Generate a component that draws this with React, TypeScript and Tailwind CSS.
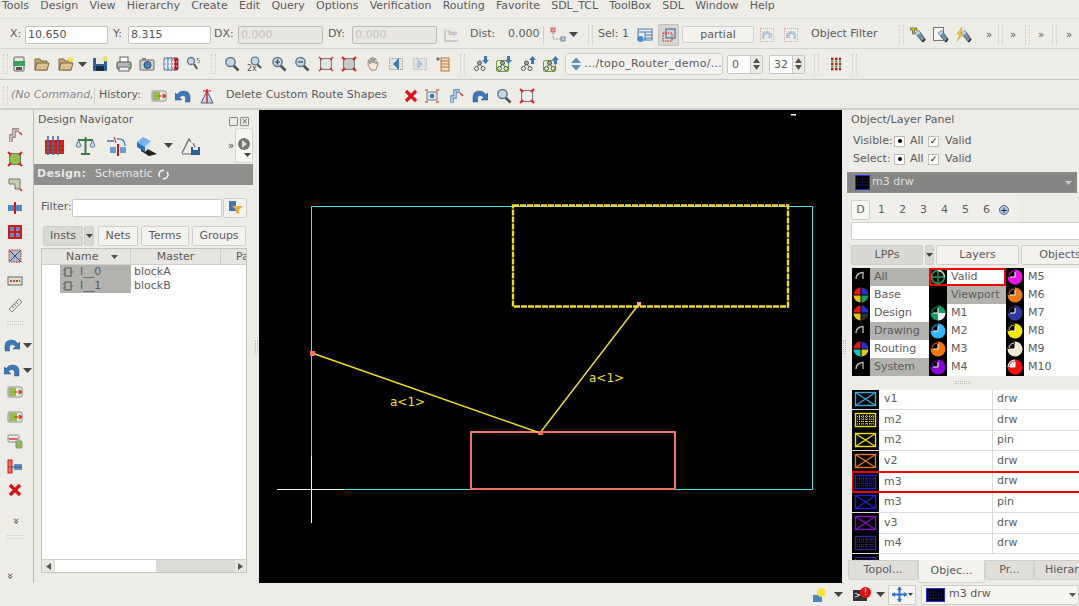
import type { ReactNode } from 'react'

const menus = ['Tools', 'Design', 'View', 'Hierarchy', 'Create', 'Edit', 'Query', 'Options', 'Verification', 'Routing', 'Favorite', 'SDL_TCL', 'ToolBox', 'SDL', 'Window', 'Help']

function Ic({ w = 16, h = 16, children }: { w?: number; h?: number; children: ReactNode }) {
	return (
		<svg width={w} height={h} viewBox={`0 0 ${w} ${h}`} className="shrink-0">
			{children}
		</svg>
	)
}

function Caret({ color = '#444' }: { color?: string }) {
	return (
		<svg width="9" height="5" viewBox="0 0 9 5" className="shrink-0">
			<path d="M0 0H9L4.5 5Z" fill={color} />
		</svg>
	)
}

function Grip() {
	return <div className="w-[5px] h-[20px] shrink-0 border-x border-dotted border-[#c9c8c3]" />
}

function Slot({ children }: { children: ReactNode }) {
	return <div className="w-[23.5px] shrink-0 flex justify-center items-center">{children}</div>
}

function Mag({ children }: { children?: ReactNode }) {
	return (
		<Ic>
			<line x1="9" y1="9" x2="14.5" y2="14.5" stroke="#555" strokeWidth="2.6" />
			<circle cx="6.5" cy="6" r="4.6" fill="#c5d6e6" stroke="#5f7a94" strokeWidth="1.5" />
			{children}
		</Ic>
	)
}

function FitBox({ inner = '#dfe3dd', thick = false }: { inner?: string; thick?: boolean }) {
	return (
		<Ic>
			<rect x="2.500" y="2.500" width="11" height="11" fill={inner} stroke="#777" />
			<path d="M1 1l3 3M15 1l-3 3M1 15l3-3M15 15l-3-3" stroke="#e02020" strokeWidth={thick ? 2 : 1.2} />
		</Ic>
	)
}

function Undo() {
	return (
		<Ic>
			<path d="M1 14V9Q1 3 7.500 3Q12 3 13.500 6.500L16 5V12H9L11.500 9.500Q10 7.500 8 7.500Q5.500 7.500 5.500 10V14Z" fill="#3f76b4" stroke="#2c5a90" strokeWidth="0.500" />
		</Ic>
	)
}

function Redo() {
	return (
		<Ic>
			<path d="M15 14V9Q15 3 8.500 3Q4 3 2.500 6.500L0 5V12H7L4.500 9.500Q6 7.500 8 7.500Q10.500 7.500 10.500 10V14Z" fill="#3f76b4" stroke="#2c5a90" strokeWidth="0.500" />
		</Ic>
	)
}

function RedX() {
	return (
		<Ic w={14} h={14}>
			<path d="M2 2L12 12M12 2L2 12" stroke="#d81414" strokeWidth="3.2" />
		</Ic>
	)
}

function Hier({ arrow = '#3f76b4', up = false, boxed = false }: { arrow?: string; up?: boolean; boxed?: boolean }) {
	return (
		<Ic>
			{boxed && <rect x="0.500" y="4.500" width="12" height="11" rx="1.500" fill="#e4efcf" stroke="#6aa03a" />}
			<circle cx="3.500" cy="12.500" r="2" fill="none" stroke="#555" />
			<circle cx="10" cy="12.500" r="2" fill="none" stroke="#555" />
			<circle cx="6.500" cy="7" r="2" fill="#9ab" stroke="#555" />
			<path d="M5.500 9L4 11M7.500 9L9.500 11" stroke="#555" />
			<path d={up ? 'M11 8V4H9L12.500 0L16 4H14V8Z' : 'M11 0V4H9L12.500 8L16 4H14V0Z'} fill={arrow} />
		</Ic>
	)
}

function Route({ tone = '#8a6a70' }: { tone?: string }) {
	return (
		<Ic>
			<path d="M4 15V9H7V3H12" fill="none" stroke={tone} strokeWidth="3.400" />
			<path d="M4 15V9H7V3H12" fill="none" stroke="#f0eee8" strokeWidth="1.200" />
			<path d="M12 5L15 8" stroke="#e02020" strokeWidth="1.300" />
		</Ic>
	)
}

function GreenBox({ wide = false }: { wide?: boolean }) {
	return (
		<Ic>
			<rect x="1" y="3" width="14" height="10" rx="1.500" fill="#e8e8e4" stroke="#888" />
			<rect x="2" y="4" width={wide ? 8 : 7} height="8" fill="#8fc04a" />
			<path d="M7 8H14M12 6L14.500 8L12 10" stroke="#e02020" fill="none" strokeWidth="1.200" />
		</Ic>
	)
}

function Torch({ children }: { children?: ReactNode }) {
	return (
		<Ic>
			{children}
			<path d="M5 6L9 3.500L15 12L12.500 15Z" fill="#6f8ea8" stroke="#444" strokeWidth="0.700" />
			<path d="M5 6L9 3.500L10.500 6L7 8.500Z" fill="#b9d0e4" />
			<path d="M12.500 15L15 12" stroke="#222" strokeWidth="1.500" />
		</Ic>
	)
}

function Sw({ color, kind }: { color: string; kind: 'x' | 'dots' }) {
	return (
		<svg width="27" height="20" viewBox="0 0 27 20" className="shrink-0">
			<rect width="27" height="20" fill="#000" />
			<rect x="3.500" y="3.500" width="20" height="13" fill="none" stroke={color} strokeWidth="1.400" />
			{kind === 'x' ? (
				<path d="M3.500 3.500L23.500 16.500M23.500 3.500L3.500 16.500" stroke={color} strokeWidth="1.300" />
			) : (
				<path d="M5 6.500H22M5 9H22M5 11.500H22M5 14H22M7.500 5V15M11 5V15M14.500 5V15M18 5V15M21 5V15" stroke={color} strokeWidth="1" strokeDasharray="1 1" />
			)}
		</svg>
	)
}

function Dots({ w, h }: { w: number; h: number }) {
	return (
		<svg width={w} height={h} viewBox={`0 0 ${w} ${h}`} className="shrink-0">
			<rect width={w} height={h} fill="#000" />
			<rect x="0.500" y="0.500" width={w - 1} height={h - 1} fill="none" stroke="#2030e0" />
			<path d={`M2 4H${w - 2}M2 7H${w - 2}M2 10H${w - 2}`} stroke="#2030e0" strokeDasharray="1 1.500" />
		</svg>
	)
}

function Pie({ color, second, notch = '#000' }: { color: string; second?: string; notch?: string }) {
	return (
		<svg width="18" height="18" viewBox="0 0 18 18" className="shrink-0">
			<rect width="18" height="18" fill="#000" />
			<circle cx="9" cy="9" r="7.500" fill={color} />
			<path d="M9 9V1.500A7.500 7.500 0 0 0 1.500 9Z" fill={notch} />
			<path d="M3 8.500A6 6 0 0 1 8.500 3" fill="none" stroke={color} strokeWidth="1" />
			<path d="M4 9H9V4" fill="none" stroke="#fff" strokeWidth="1" />
			{second && <path d="M9 9H16.500A7.500 7.500 0 0 1 9 16.500Z" fill={second} />}
		</svg>
	)
}

function Multi({ last = '#20a060', third = '#e0c818' }: { last?: string; third?: string }) {
	return (
		<svg width="18" height="18" viewBox="0 0 18 18" className="shrink-0">
			<rect width="18" height="18" fill="#000" />
			<path d="M9 9V1.500A7.500 7.500 0 0 0 1.500 9Z" fill="#e01818" />
			<path d="M9 9V1.500A7.500 7.500 0 0 1 16.500 9Z" fill="#2035d0" />
			<path d="M9 9H1.500A7.500 7.500 0 0 0 9 16.500Z" fill={third} />
			<path d="M9 9H16.500A7.500 7.500 0 0 1 9 16.500Z" fill={last} />
			<path d="M1.500 9H16.500M9 1.500V16.500" stroke="#000" strokeWidth="1" />
		</svg>
	)
}

function Arc() {
	return (
		<svg width="18" height="18" viewBox="0 0 18 18" className="shrink-0">
			<rect width="18" height="18" fill="#000" />
			<path d="M4 11Q4 5 11 4.500V11" fill="none" stroke="#bbb" strokeWidth="1.300" />
		</svg>
	)
}

function ValidPie() {
	return (
		<svg width="18" height="18" viewBox="0 0 18 18" className="shrink-0">
			<rect width="18" height="18" fill="#000" />
			<circle cx="9" cy="9" r="6.500" fill="none" stroke="#1fa060" strokeWidth="1.500" />
			<path d="M2 9H16M9 2V16" stroke="#1fa060" strokeWidth="1.300" />
			<path d="M9 2.500A6.500 6.500 0 0 1 15.500 9" fill="none" stroke="#ddd" strokeWidth="1.300" />
		</svg>
	)
}

function LppCell({ icon, label, grey = false }: { icon: ReactNode; label: string; grey?: boolean }) {
	return (
		<div className="flex h-[18px] items-stretch">
			<div className="w-[18px] bg-black shrink-0">{icon}</div>
			<div className={grey ? 'flex-1 bg-[#b3b2ae] pl-[4px] leading-[18px]' : 'flex-1 bg-white pl-[4px] leading-[18px]'}>
				{label}
			</div>
		</div>
	)
}

function Btn({ w, children, on = false }: { w: string; children: ReactNode; on?: boolean }) {
	return (
		<div
			className={`${w} h-[20px] shrink-0 flex items-center justify-center rounded-[2px] border border-[#cfcec9] ${on ? 'bg-[#d9d8d3]' : 'bg-[#f3f2ee]'}`}
		>
			{children}
		</div>
	)
}

function Input({ w, value, off = false }: { w: string; value: string; off?: boolean }) {
	return (
		<div
			className={`${w} h-[18px] shrink-0 rounded-[2px] border pl-[2px] leading-[16px] ${off ? 'border-[#bdbcb7] bg-[#e8e7e2] text-[#c3c2bd]' : 'border-[#c4c3be] bg-white text-[#555]'}`}
		>
			{value}
		</div>
	)
}

function Spin({ w, value }: { w: string; value: string }) {
	return (
		<div className={`${w} h-[19px] shrink-0 flex rounded-[2px] border border-[#c9c8c3] bg-white`}>
			<div className="flex-1 pl-[4px] leading-[17px]">{value}</div>
			<div className="w-[12px] bg-[#ecebe6] border-l border-[#c9c8c3] flex flex-col items-center justify-center gap-[2px]">
				<svg width="7" height="5"><path d="M0 5H7L3.500 0Z" fill="#555" /></svg>
				<svg width="7" height="5"><path d="M0 0H7L3.500 5Z" fill="#555" /></svg>
			</div>
		</div>
	)
}

const layers: { name: string; kind: string; color: string; sw: 'x' | 'dots'; sel?: boolean }[] = [
	{ name: 'v1', kind: 'drw', color: '#35a8e0', sw: 'x' },
	{ name: 'm2', kind: 'drw', color: '#f0e000', sw: 'dots' },
	{ name: 'm2', kind: 'pin', color: '#f0e000', sw: 'x' },
	{ name: 'v2', kind: 'drw', color: '#e87810', sw: 'x' },
	{ name: 'm3', kind: 'drw', color: '#2020e0', sw: 'dots', sel: true },
	{ name: 'm3', kind: 'pin', color: '#2020e0', sw: 'x' },
	{ name: 'v3', kind: 'drw', color: '#8010c8', sw: 'x' },
	{ name: 'm4', kind: 'drw', color: '#302890', sw: 'dots' },
]

export default function App() {
	return (
		<div className="w-[1079px] h-[606px] overflow-hidden flex flex-col bg-[#edece7] text-[#5c5c5c] text-[11px] font-['DejaVu_Sans',sans-serif]">
			{/* menu bar, cut off at the top */}
			<div className="h-[19px] shrink-0 flex gap-[11.200px] pl-[2px] border-b border-[#dcdbd6] leading-[12px]">
				{menus.map((m) => (
					<span key={m}>{m}</span>
				))}
			</div>

			{/* coordinates toolbar */}
			<div className="h-[30px] shrink-0 flex items-center pl-[10px] pt-[2px] border-b border-[#d4d3ce] whitespace-nowrap">
				<span className="w-[15px]">X:</span>
				<Input w="w-[83px]" value="10.650" />
				<span className="w-[15px] ml-[5px]">Y:</span>
				<Input w="w-[83px]" value="8.315" />
				<span className="w-[24px] ml-[3px]">DX:</span>
				<Input w="w-[85px]" value="0.000" off />
				<span className="w-[24px] ml-[5px]">DY:</span>
				<Input w="w-[85px]" value="0.000" off />
				<div className="ml-[6px]">
					<Ic>
						<path d="M2 2V14H15" fill="none" stroke="#aaa" />
						<text x="4" y="8" fontSize="6" fill="#999">Top</text>
					</Ic>
				</div>
				<span className="ml-[11px] w-[38px]">Dist:</span>
				<span className="w-[32px]">0.000</span>
				<div className="ml-[3px] w-px h-[18px] bg-[#cfcec9]" />
				<div className="ml-[6px]">
					<Ic>
						<path d="M3 3V12H13" fill="none" stroke="#999" strokeDasharray="2 1" />
						<rect x="1" y="1" width="4" height="4" fill="#f0a0a0" stroke="#c33" strokeWidth="0.700" />
						<rect x="11" y="10" width="4" height="4" fill="#b8cbe0" stroke="#567" strokeWidth="0.700" />
					</Ic>
				</div>
				<div className="ml-[3px]"><Caret /></div>
				<div className="ml-[10px]"><Grip /></div>
				<span className="ml-[5px] w-[39px]">Sel: 1</span>
				<Ic>
					<rect x="1" y="2" width="14" height="11" fill="#e8edf3" stroke="#4a78a8" />
					<path d="M1 5H15M8 5V13M8 8H15M8 11H15" stroke="#4a78a8" />
					<circle cx="3.500" cy="12" r="3" fill="#3f8fd0" />
				</Ic>
				<div className="ml-[5px] w-[21px] h-[22px] rounded-[2px] bg-[#d6d5d0] border border-[#c2c1bc] flex items-center justify-center">
					<Ic w={14} h={14}>
						<rect x="4" y="1" width="9" height="9" fill="none" stroke="#2f5f98" />
						<rect x="1" y="5" width="9" height="8" fill="none" stroke="#d81414" strokeDasharray="1.500 1" />
					</Ic>
				</div>
				<div className="ml-[3px] w-[72px] h-[17px] rounded-[2px] border border-[#cfcec9] bg-[#f3f2ee] text-center leading-[15px]">partial</div>
				<div className="ml-[6px] w-[14px] h-[14px] border border-dotted border-[#e0a890] flex items-center justify-center">
					<svg width="12" height="10"><path d="M1 9V5Q1 1 6 1Q9 1 10 4L11 3V8H6L8 6Q7 4 5.500 4Q3.500 4 3.500 6V9Z" fill="#b5c5d8" /></svg>
				</div>
				<div className="ml-[10px] w-[14px] h-[14px] border border-dotted border-[#e0a890] flex items-center justify-center">
					<svg width="12" height="10"><path d="M11 9V5Q11 1 6 1Q3 1 2 4L1 3V8H6L4 6Q5 4 6.500 4Q8.500 4 8.500 6V9Z" fill="#b5c5d8" /></svg>
				</div>
				<span className="ml-[13px] w-[88px]">Object Filter</span>
				<Grip />
				<div className="ml-[6px]">
					<Torch>
						<path d="M0 1H7V3H4.500V7H2.500V3H0Z" fill="#e8c810" stroke="#222" strokeWidth="0.500" />
					</Torch>
				</div>
				<div className="ml-[7px]">
					<Torch>
						<rect x="0.500" y="0.500" width="10" height="13" fill="#f4f4f4" stroke="#777" />
					</Torch>
				</div>
				<div className="ml-[7px]">
					<Torch>
						<path d="M6 0L1 7H4L1 14L8 6H5Z" fill="#f0c820" stroke="#b08a10" strokeWidth="0.400" />
					</Torch>
				</div>
				<span className="ml-[14px] w-[12px] text-[10px]">»</span>
				<Grip />
				<span className="ml-[7px] w-[15px] text-[10px]">»</span>
				<Grip />
				<span className="ml-[8px] w-[14px] text-[10px]">»</span>
				<Grip />
				<span className="ml-[9px] text-[10px]">»</span>
			</div>

			{/* main toolbar */}
			<div className="h-[31px] shrink-0 flex items-center pl-[3px] border-b border-[#c9c8c3] whitespace-nowrap">
				<Grip />
				<div className="-ml-[1px] flex items-center">
					<Slot>
						<Ic>
							<rect x="3" y="1" width="10" height="14" rx="1" fill="#e6e6e0" stroke="#666" />
							<rect x="2" y="5" width="12" height="5" fill="#3fa05a" />
							<rect x="5" y="11" width="6" height="3" fill="#555" />
						</Ic>
					</Slot>
					<Slot>
						<Ic>
							<path d="M1 14V3H6L7 5H13V14Z" fill="#c9a56a" stroke="#7a6a50" />
							<path d="M1 14L3 7H15L13 14Z" fill="#dcc08c" stroke="#7a6a50" />
						</Ic>
					</Slot>
					<Slot>
						<Ic>
							<path d="M1 14V3H6L7 5H13V14Z" fill="#c9a56a" stroke="#7a6a50" />
							<path d="M1 14L3 7H15L13 14Z" fill="#dcc08c" stroke="#7a6a50" />
							<circle cx="12.500" cy="3.500" r="2.500" fill="#f4e050" />
						</Ic>
					</Slot>
					<div className="w-[11px] flex"><Caret /></div>
					<Slot>
						<Ic>
							<rect x="1" y="2" width="14" height="13" rx="1" fill="#2f5f98" />
							<rect x="4" y="2" width="8" height="6" fill="#e8e8e8" />
							<rect x="4" y="10" width="8" height="5" fill="#1c2c40" />
							<circle cx="13" cy="3" r="2.500" fill="#f4e050" />
						</Ic>
					</Slot>
					<Slot>
						<Ic>
							<rect x="4" y="1" width="8" height="6" fill="#fafafa" stroke="#666" />
							<rect x="1" y="6" width="14" height="7" rx="1" fill="#b5b8ba" stroke="#555" />
							<rect x="3" y="11" width="10" height="4" fill="#eee" stroke="#666" />
							<rect x="12" y="8" width="2" height="1" fill="#4c4" />
						</Ic>
					</Slot>
					<Slot>
						<Ic>
							<rect x="1" y="4" width="14" height="10" rx="1" fill="#d0d3d6" stroke="#666" />
							<rect x="3" y="2" width="4" height="2" fill="#888" />
							<circle cx="8.500" cy="9" r="3.500" fill="#3f86c4" stroke="#345" />
						</Ic>
					</Slot>
					<Slot>
						<Ic>
							<rect x="1" y="2" width="14" height="12" rx="1" fill="#d8e2ee" stroke="#3f6fa4" />
							<path d="M5 2V14M9 2V14" stroke="#3f6fa4" />
							<rect x="11" y="2" width="4" height="12" fill="#d81414" />
							<path d="M1 6H15M1 10H15" stroke="#fff" strokeDasharray="1 1" />
						</Ic>
					</Slot>
					<Slot>
						<Ic>
							<circle cx="5" cy="5" r="3.500" fill="#c5d6e6" stroke="#5f7a94" strokeWidth="1.300" />
							<path d="M8 8L11 13" stroke="#555" strokeWidth="2" />
							<text x="10" y="7" fontSize="7" fill="#4a78a8">5</text>
						</Ic>
					</Slot>
					<div className="w-[14px] flex justify-center"><Grip /></div>
					<Slot><Mag /></Slot>
					<Slot>
						<Ic>
							<line x1="10" y1="8" x2="14" y2="12" stroke="#555" strokeWidth="2.300" />
							<circle cx="8" cy="5" r="3.800" fill="#c5d6e6" stroke="#5f7a94" strokeWidth="1.300" />
							<text x="0" y="15" fontSize="8" fill="#555">2x</text>
						</Ic>
					</Slot>
					<Slot>
						<Mag>
							<path d="M4 6H9M6.500 3.500V8.500" stroke="#345" strokeWidth="1.200" />
						</Mag>
					</Slot>
					<Slot>
						<Mag>
							<path d="M4 6H9" stroke="#345" strokeWidth="1.200" />
						</Mag>
					</Slot>
					<Slot><FitBox /></Slot>
					<Slot><FitBox inner="#c9c9c4" thick /></Slot>
					<Slot>
						<Ic>
							<path d="M3 9V5Q3 4 4 4L5 8V2.500Q6 1.500 7 2.500V7V2Q8 1 9 2V7V3Q10 2 11 3V8L12 6Q13.500 6 13 8L11 14H6L3 9Z" fill="#f4e6d0" stroke="#777" strokeWidth="0.800" />
						</Ic>
					</Slot>
					<Slot>
						<Ic>
							<rect x="1.500" y="2.500" width="13" height="11" fill="#e4e4df" stroke="#999" strokeDasharray="1.500 1" />
							<path d="M11 2V14L5 8Z" fill="#3f76b4" />
						</Ic>
					</Slot>
					<Slot>
						<Ic>
							<rect x="1.500" y="2.500" width="13" height="11" fill="#e4e4df" stroke="#bbb" strokeDasharray="1.500 1" />
							<path d="M5 2V14L11 8Z" fill="#b5c5d8" />
						</Ic>
					</Slot>
					<Slot>
						<Ic>
							<path d="M1 3H5M3 1V5" stroke="#555" />
							<rect x="6" y="2" width="8" height="13" fill="#f0dcc0" stroke="#b87840" />
							<path d="M6 5H14M6 8H14M6 11H14" stroke="#b87840" />
						</Ic>
					</Slot>
					<div className="w-[14px] flex justify-center"><Grip /></div>
					<Slot><Hier /></Slot>
					<Slot><Hier boxed /></Slot>
					<Slot><Hier up /></Slot>
					<Slot><Hier up boxed /></Slot>
				</div>
				<div className="ml-[2px] w-[158px] h-[22px] shrink-0 flex items-center gap-[3px] rounded-[3px] border border-[#cfcec9] bg-[#f3f2ee] pl-[5px]">
					<svg width="11" height="14" viewBox="0 0 11 14"><path d="M0 6L5.500 0L11 6ZM0 8H11L5.500 14Z" fill="#5f8fc0" /></svg>
					<span className="tracking-[0.25px]">.../topo_Router_demo/...</span>
				</div>
				<div className="ml-[4px]"><Spin w="w-[36px]" value="0" /></div>
				<div className="ml-[6px]"><Spin w="w-[36px]" value="32" /></div>
				<div className="ml-[9px]"><Grip /></div>
				<div className="ml-[10px]">
					<Ic w={14} h={14}>
						<path d="M2 2H12M2 7H12M2 12H12" stroke="#c01818" strokeWidth="2.500" strokeDasharray="2.500 1.500" />
						<path d="M2 4.500H12M2 9.500H12" stroke="#3a9a3a" strokeWidth="1.500" strokeDasharray="2.500 1.500" />
					</Ic>
				</div>
				<div className="ml-[9px]"><Grip /></div>
			</div>

			{/* history toolbar */}
			<div className="h-[30px] shrink-0 flex items-center pl-[3px] pt-[3px] border-b-2 border-[#cfcec9] whitespace-nowrap">
				<Grip />
				<span className="ml-[3px] w-[83px] italic text-[#8a8a8a] overflow-hidden">(No Command,</span>
				<div className="w-px h-[16px] bg-[#cfcec9]" />
				<span className="ml-[4px] w-[43px]">History:</span>
				<div className="ml-[9px]"><GreenBox /></div>
				<div className="ml-[8px]"><Redo /></div>
				<div className="ml-[8px]">
					<Ic>
						<path d="M8 3L2 15H14Z" fill="#c5d6e6" stroke="#557" />
						<path d="M8 1V15" stroke="#d81414" strokeWidth="1.400" />
						<path d="M4 3H12" stroke="#d81414" />
					</Ic>
				</div>
				<span className="ml-[11px] w-[178px]">Delete Custom Route Shapes</span>
				<div className="w-[14px]"><RedX /></div>
				<div className="ml-[6px]">
					<Ic>
						<rect x="3" y="4" width="10" height="8" fill="#dfe8f0" stroke="#777" />
						<path d="M1 2H4M12 2H15M1 14H4M12 14H15" stroke="#e02020" />
						<rect x="6" y="6" width="4" height="4" fill="#3f76b4" />
					</Ic>
				</div>
				<div className="ml-[8px]"><Route tone="#4a80bc" /></div>
				<div className="ml-[8px]"><Undo /></div>
				<div className="ml-[8px]"><Mag /></div>
				<div className="ml-[7px]"><FitBox inner="#ecebe6" thick /></div>
			</div>

			{/* work area */}
			<div className="h-[473px] shrink-0 flex">
				{/* left vertical toolbar */}
				<div className="w-[34px] shrink-0 border-r border-[#bdbcb7] flex flex-col items-center pt-[17px] pb-[1px]">
					<div className="flex flex-col gap-[8.300px] items-center pr-[4px]">
						<Route />
						<FitBox inner="#8fc04a" thick />
						<Ic>
							<path d="M2 3H13V13H8V8H2Z" fill="#c8cfa8" stroke="#777" />
							<path d="M13 13L15 15" stroke="#e02020" strokeWidth="1.500" />
						</Ic>
						<Ic>
							<rect x="1" y="5" width="6" height="6" fill="#4a8ac4" />
							<rect x="9" y="5" width="6" height="6" fill="#4a8ac4" />
							<rect x="7" y="2" width="2" height="12" fill="#d81414" />
						</Ic>
						<Ic>
							<rect x="1" y="1" width="14" height="14" rx="1" fill="#d81414" />
							<rect x="3" y="3" width="4" height="4" fill="#5a90d0" />
							<rect x="9" y="3" width="4" height="4" fill="#5a90d0" />
							<rect x="3" y="9" width="4" height="4" fill="#5a90d0" />
							<rect x="9" y="9" width="4" height="4" fill="#5a90d0" />
						</Ic>
						<Ic>
							<rect x="2" y="2" width="12" height="12" fill="#a9bcd2" stroke="#d81414" strokeDasharray="1.500 1" />
							<path d="M3 3L13 13M13 3L3 13" stroke="#445" />
						</Ic>
						<Ic>
							<rect x="1" y="4" width="14" height="8" fill="#e4e1d4" stroke="#667" />
							<path d="M3 8H13" stroke="#c05020" strokeWidth="2" strokeDasharray="2 1" />
						</Ic>
						<Ic>
							<path d="M2 12L12 2L15 5L5 15Z" fill="#e6e6e2" stroke="#888" />
							<path d="M5 9L7 11M7 7L9 9M9 5L11 7" stroke="#888" />
						</Ic>
					</div>
					<div className="mt-[8px] w-[16px] h-[5px] mr-[4px] border-y border-dotted border-[#c9c8c3]" />
					<div className="mt-[12px] flex flex-col gap-[9px] items-center">
						<div className="flex items-center gap-[3px] ml-[2px]"><Undo /><Caret /></div>
						<div className="flex items-center gap-[3px] ml-[2px]"><Redo /><Caret /></div>
					</div>
					<div className="mt-[6px] flex flex-col gap-[8.500px] items-center pr-[4px]">
						<GreenBox />
						<GreenBox wide />
						<Ic>
							<rect x="1" y="2" width="11" height="7" rx="1" fill="#e8e8e4" stroke="#888" />
							<rect x="9" y="8" width="6" height="7" rx="1" fill="#8fc04a" stroke="#888" />
							<path d="M2 6H11" stroke="#e02020" strokeWidth="1.300" />
						</Ic>
						<Ic>
							<rect x="1" y="2" width="4" height="13" fill="#e87060" stroke="#d81414" />
							<rect x="7" y="6" width="8" height="6" fill="#5a90d0" />
							<path d="M1 9H15" stroke="#555" />
						</Ic>
						<div className="mt-[1px]"><RedX /></div>
					</div>
					<span className="mt-[20px] pr-[4px] leading-[12px] text-[#444] rotate-90">»</span>
					<div className="mt-[6px] mr-[4px] w-[16px] h-[5px] border-y border-dotted border-[#c9c8c3]" />
					<span className="mt-[31px] leading-[12px] text-[#444] mr-[13px] rotate-90">»</span>
				</div>

				{/* design navigator */}
				<div className="w-[219px] shrink-0 flex flex-col">
					<div className="h-[17px] flex items-end pl-[4px] pb-[1px] justify-between pr-[4px]">
						<span className="text-[11px] leading-[13px]">Design Navigator</span>
						<div className="flex gap-[2px]">
							<div className="w-[9px] h-[9px] border border-[#888] rounded-[1px]" />
							<div className="w-[9px] h-[9px] border border-[#888] rounded-[1px] text-[8px] leading-[7px] text-center">×</div>
						</div>
					</div>
					<div className="h-[37px] flex items-center pl-[10px]">
						<Ic w={21} h={21}>
							<rect x="1" y="5" width="19" height="14" fill="#d81414" />
							<path d="M1 9H20M1 13H20M1 17H20" stroke="#3a9a3a" strokeWidth="1.200" strokeDasharray="2 1" />
							<path d="M4 1V20M9 1V20M14 1V20" stroke="#3f6fa4" strokeWidth="1.600" />
						</Ic>
						<div className="ml-[10px]">
							<Ic w={21} h={21}>
								<path d="M10.500 2V18M3 5H18M6 19H15" stroke="#3f7a50" strokeWidth="2" />
								<path d="M1 11L3.500 5L6 11Q3.500 14 1 11ZM15 11L17.500 5L20 11Q17.500 14 15 11Z" fill="#c5dcec" stroke="#5a7a90" />
							</Ic>
						</div>
						<div className="ml-[9px]">
							<Ic w={24} h={21}>
								<path d="M2 6H9M12 4Q20 3 20 11" fill="none" stroke="#3f76b4" strokeWidth="1.300" />
								<rect x="5" y="12" width="6" height="6" fill="#6a9ccc" />
								<rect x="15" y="12" width="6" height="6" fill="#6a9ccc" />
								<rect x="12" y="9" width="2" height="12" fill="#d81414" />
								<path d="M9 2L11 8" stroke="#d81414" />
							</Ic>
						</div>
						<div className="ml-[7px]">
							<Ic w={22} h={21}>
								<path d="M6 11L21 19L13 21L5 16Z" fill="#222" />
								<path d="M1 7L7 2L15 6L9 12Z" fill="#7ab4ea" />
								<path d="M1 7L9 12V17L1 12Z" fill="#2f6fb4" />
								<path d="M9 12L15 6V11L9 17Z" fill="#d4e4f4" />
							</Ic>
						</div>
						<div className="ml-[6px]"><Caret /></div>
						<div className="ml-[5px]">
							<Ic w={23} h={21}>
								<path d="M4 18L11 4L13 7M15 8L19 16M4 19H13" fill="none" stroke="#667" strokeWidth="1.200" />
								<rect x="13" y="12" width="9" height="8" fill="#2f5f98" />
								<rect x="15" y="12" width="5" height="3" fill="#e8e8e8" />
							</Ic>
						</div>
						<span className="ml-[27px] w-[9px] text-[#444] text-[10px]">»</span>
						<div className="w-[21px] h-[35px] rounded-t-[3px] bg-[#f6f5f1] border border-[#d4d3ce] flex flex-col items-center pt-[8px]">
							<Ic w={14} h={14}>
								<circle cx="7" cy="7" r="6" fill="#777" />
								<path d="M5 3V11L10 7Z" fill="#ddd" />
							</Ic>
							<div className="self-end mr-[1px] mt-[2px]"><svg width="7" height="4"><path d="M0 0H7L3.500 4Z" fill="#444" /></svg></div>
						</div>
					</div>
					<div className="h-[21px] bg-[#8f8f8d] flex items-center pl-[3px] text-[#e8e8e6] w-[219px]">
						<span className="font-bold tracking-[0.3px] w-[58px]">Design:</span>
						<span>Schematic</span>
						<svg width="11" height="11" viewBox="0 0 11 11" className="ml-[5px]">
							<path d="M2 8A4 4 0 0 1 6 1.500M9 3A4 4 0 0 1 5 9.500" fill="none" stroke="#f4f4f4" strokeWidth="1.500" />
						</svg>
					</div>
					<div className="ml-[7px] mt-[13px] h-[19px] flex items-center w-[206px]">
						<span className="w-[31px]">Filter:</span>
						<div className="w-[150px] h-[18px] bg-white border border-[#c9c8c3] rounded-[2px]" />
						<div className="ml-[1px] w-[24px] h-[20px] rounded-[2px] border border-[#cfcec9] bg-[#f3f2ee] flex items-center justify-center">
							<Ic w={15} h={13}>
								<rect x="1" y="0" width="7" height="10" fill="#3f76b4" />
								<path d="M4 5H15L11 9V13L8 12V9Z" fill="#e8b040" />
							</Ic>
						</div>
					</div>
					<div className="ml-[9px] mt-[9px] h-[20px] flex">
						<Btn w="w-[40px]" on>Insts</Btn>
						<div className="ml-px w-[10px] h-[20px] rounded-[2px] bg-[#d9d8d3] border border-[#cfcec9] flex items-center justify-center"><svg width="7" height="4"><path d="M0 0H7L3.500 4Z" fill="#444" /></svg></div>
						<div className="ml-[4px]"><Btn w="w-[40px]">Nets</Btn></div>
						<div className="ml-[3px]"><Btn w="w-[48px]">Terms</Btn></div>
						<div className="ml-[3px]"><Btn w="w-[54px]">Groups</Btn></div>
					</div>
					<div className="ml-[7px] mt-[2px] w-[206px] h-[325px] border border-[#c4c3be] bg-white flex flex-col">
						<div className="h-[16px] shrink-0 flex bg-[#e6e5e0] border-b border-[#d0cfca] leading-[15px] overflow-hidden">
							<div className="w-[89px] shrink-0 pl-[24px] border-r border-[#cfcec9] flex items-center gap-[13px]">Name<svg width="7" height="4"><path d="M0 0H7L3.500 4Z" fill="#555" /></svg></div>
							<div className="w-[90px] shrink-0 text-center border-r border-[#cfcec9]">Master</div>
							<div className="pl-[15px] whitespace-nowrap">Pa</div>
						</div>
						<div className="flex-1">
							{[['I__0', 'blockA'], ['I__1', 'blockB']].map(([inst, master]) => (
								<div key={inst} className="h-[14px] flex leading-[14px]">
									<div className="ml-[18px] w-[71px] bg-[#b3b2ae] flex items-center pl-[3px] gap-[7px]">
										<svg width="10" height="10" viewBox="0 0 10 10"><rect x="2" y="1" width="6" height="8" fill="none" stroke="#555" /><path d="M0 3H2M0 7H2M8 5H10" stroke="#555" /></svg>
										<span>{inst}</span>
									</div>
									<span className="ml-[3px]">{master}</span>
								</div>
							))}
						</div>
						<div className="h-[13px] shrink-0 flex border-t border-[#cfcec9]">
							<div className="w-[12px] bg-[#e8e7e2] flex items-center justify-center"><svg width="5" height="7"><path d="M5 0V7L0 3.500Z" fill="#555" /></svg></div>
							<div className="w-[103px] bg-white border-x border-[#dcdbd6]" />
							<div className="w-[78px] bg-[#dcdbd6]" />
							<div className="flex-1 bg-[#e8e7e2] flex items-center justify-center"><svg width="5" height="7"><path d="M0 0V7L5 3.500Z" fill="#555" /></svg></div>
						</div>
					</div>
				</div>

				{/* splitter */}
				<div className="w-[6px] shrink-0 flex items-center justify-center">
					<div className="w-[3px] h-[14px] border-x border-dotted border-[#bbb]" />
				</div>

				{/* layout canvas */}
				<div className="w-[583px] shrink-0 bg-black">
					<svg width="583" height="473" viewBox="259 110 583 473">
						<path d="M344 489.500H812.500V206.500H311.500V456" fill="none" stroke="#40e8e8" strokeWidth="1" />
						<path d="M311.500 456V523M277 489.500H344" stroke="#f4f4f4" strokeWidth="1" />
						<rect x="513" y="205.500" width="275" height="101" fill="none" stroke="#f2d820" strokeWidth="2.400" strokeDasharray="6 1" />
						<rect x="471" y="432" width="204" height="57" fill="none" stroke="#f47060" strokeWidth="2" />
						<path d="M639 304L540 433M312 353L540 433" stroke="#f2e020" strokeWidth="1.400" />
						<rect x="637" y="302" width="4" height="4" fill="#f8b090" />
						<rect x="538" y="431" width="5" height="4" fill="#f47060" />
						<rect x="310" y="351" width="5" height="5" fill="#f47060" />
						<rect x="791" y="114" width="5" height="1.500" fill="#fff" />
						<text x="390" y="406" fontSize="12" fill="#f2e020" fontFamily="DejaVu Sans">a&lt;1&gt;</text>
						<text x="589" y="382" fontSize="12" fill="#f2e020" fontFamily="DejaVu Sans">a&lt;1&gt;</text>
					</svg>
				</div>

				{/* splitter */}
				<div className="w-[5px] shrink-0 flex items-center justify-center">
					<div className="w-[3px] h-[14px] border-x border-dotted border-[#bbb]" />
				</div>

				{/* object / layer panel */}
				<div className="flex-1 min-w-0 flex flex-col overflow-hidden">
					<div className="h-[18px] pl-[4px] pb-[2px] flex items-end leading-[13px]">Object/Layer Panel</div>
					{['Visible:', 'Select:'].map((label, i) => (
						<div key={label} className={`${i === 0 ? 'mt-[4px]' : ''} h-[18px] flex items-center pl-[6px]`}>
							<span className="w-[41px]">{label}</span>
							<div className="w-[11px] h-[11px] bg-white border border-[#bbb] flex items-center justify-center">
								<div className="w-[4px] h-[4px] rounded-full bg-black" />
							</div>
							<span className="ml-[5px] w-[18px]">All</span>
							<div className="w-[11px] h-[11px] bg-white border border-[#bbb] flex items-center justify-center text-[9px] leading-[9px] text-black">✓</div>
							<span className="ml-[6px]">Valid</span>
						</div>
					))}
					<div className="mt-[4px] h-[21px] w-[230px] bg-[#858583] border border-[#8f8f8d] flex items-center pl-[7px] gap-[2px] text-[#e0e0de]">
						<Dots w={15} h={15} />
						<span>m3 drw</span>
						<svg width="7" height="4" className="ml-auto mr-[4px]"><path d="M0 0H7L3.500 4Z" fill="#c8c8c6" /></svg>
					</div>
					<div className="mt-[5px] h-[24px] w-[167px] ml-[4px] bg-[#f0efeb] flex items-center">
						<div className="w-[19px] h-[20px] bg-[#f8f7f4] border border-[#cfcec9] rounded-[2px] text-center leading-[18px]">D</div>
						<div className="ml-[1px] flex">
							{['1', '2', '3', '4', '5', '6'].map((n) => (
								<span key={n} className="w-[21px] text-center">{n}</span>
							))}
						</div>
						<div className="ml-[2px] w-[10px] h-[10px] rounded-full bg-[#b8c8e0] border border-[#667] text-[9px] leading-[8px] text-center text-black">+</div>
					</div>
					<div className="ml-[4px] h-[18px] bg-white border border-[#cfcec9] rounded-[2px] w-[240px]" />
					<div className="ml-[4px] mt-[5px] h-[20px] flex w-[270px]">
						<Btn w="w-[72px]" on>LPPs</Btn>
						<div className="ml-[2px] w-[9px] h-[20px] rounded-[2px] bg-[#d9d8d3] border border-[#cfcec9] flex items-center justify-center"><svg width="7" height="4"><path d="M0 0H7L3.500 4Z" fill="#444" /></svg></div>
						<div className="ml-[2px]"><Btn w="w-[83px]">Layers</Btn></div>
						<div className="ml-[2px]"><Btn w="w-[78px]">Objects</Btn></div>
					</div>
					<div className="ml-[5px] mt-[3px] grid grid-cols-[77px_77px_1fr] bg-white">
						<div>
							<LppCell icon={<Arc />} label="All" grey />
							<LppCell icon={<Multi />} label="Base" />
							<LppCell icon={<Multi third="#e0c818" last="#303030" />} label="Design" />
							<LppCell icon={<Arc />} label="Drawing" grey />
							<LppCell icon={<Multi third="#20c0c0" last="#e0c818" />} label="Routing" />
							<LppCell icon={<Arc />} label="System" grey />
						</div>
						<div>
							<div className="relative">
								<LppCell icon={<ValidPie />} label="Valid" />
								<div className="absolute inset-0 border-2 border-[#f00000] pointer-events-none" />
							</div>
							<LppCell icon={null} label="Viewport" grey />
							<LppCell icon={<Pie color="#10a060" second="#f4f4f4" />} label="M1" />
							<LppCell icon={<Pie color="#30b8f8" />} label="M2" />
							<LppCell icon={<Pie color="#f07810" />} label="M3" />
							<LppCell icon={<Pie color="#8808d8" />} label="M4" />
						</div>
						<div>
							<LppCell icon={<Pie color="#f010e8" />} label="M5" />
							<LppCell icon={<Pie color="#f07810" />} label="M6" />
							<LppCell icon={<Pie color="#3038a0" />} label="M7" />
							<LppCell icon={<Pie color="#f4e800" />} label="M8" />
							<LppCell icon={<Pie color="#f0e8d0" />} label="M9" />
							<LppCell icon={<Pie color="#f41010" second="#f41010" notch="#f4f4f4" />} label="M10" />
						</div>
					</div>
					<div className="h-[13.500px] shrink-0 flex items-center justify-center bg-[#edece7]">
						<div className="w-[16px] h-[3px] border-y border-dotted border-[#bbb]" />
					</div>
					<div className="ml-[5px] flex-1 min-h-0 bg-white overflow-hidden">
						{layers.map((l, i) => (
							<div
								key={i}
								className={`relative w-[260px] h-[20.600px] flex items-center border-b border-[#dcdbd6] ${l.sel ? 'outline-2 outline-[#f00000] -outline-offset-1 z-10' : ''}`}
							>
								<Sw color={l.color} kind={l.sw} />
								<span className="ml-[3px] w-[111px] pl-[2px] border-r border-[#dcdbd6] leading-[20px]">{l.name}</span>
								<span className="ml-[4px]">{l.kind}</span>
							</div>
						))}
						<Sw color="#302890" kind="dots" />
					</div>
					<div className="h-[23px] shrink-0 flex items-start pl-[1px] whitespace-nowrap overflow-hidden">
						<div className="w-[70px] h-[20px] shrink-0 bg-[#dfded9] border border-[#cfcec9] rounded-b-[3px] text-center leading-[18px]">Topol...</div>
						<div className="w-[67px] h-[23px] shrink-0 bg-[#f3f2ee] border border-t-0 border-[#d4d3ce] rounded-b-[3px] text-center leading-[22px]">Objec...</div>
						<div className="w-[49px] h-[20px] shrink-0 bg-[#dfded9] border border-[#cfcec9] rounded-b-[3px] text-center leading-[18px]">Pr...</div>
						<div className="w-[46px] h-[20px] shrink-0 bg-[#dfded9] border border-r-0 border-[#cfcec9] pl-[10px] leading-[18px]">Hierar</div>
					</div>
				</div>
			</div>

			{/* status bar */}
			<div className="flex-1 flex items-center pl-[812px] whitespace-nowrap">
				<Ic>
					<rect x="1" y="8" width="9" height="7" fill="#4a86c0" />
					<circle cx="9.500" cy="5.500" r="4.500" fill="#f4e040" />
				</Ic>
				<div className="ml-[6px]"><Caret /></div>
				<div className="ml-[10px] relative w-[17px] h-[16px]">
					<div className="absolute left-0 top-[3px] w-[14px] h-[13px] bg-[#333] text-white text-[8px] leading-[11px] pl-[1px] border-b-2 border-[#eee]">&gt;</div>
					<div className="absolute left-[7px] top-0 w-[11px] h-[11px] rounded-full bg-[#e01010] text-white text-[8px] leading-[11px] text-center">!</div>
				</div>
				<div className="ml-[6px]"><Caret /></div>
				<div className="ml-[3px] w-[28px] h-[20px] rounded-[2px] border border-[#cfcec9] bg-[#f6f5f1] flex items-center pl-[3px] gap-[1px]">
					<Ic w={15} h={15}>
						<path d="M7.500 0V15M0 7.500H15" stroke="#2f6fd0" strokeWidth="2" />
						<path d="M7.500 0L5 3H10ZM7.500 15L5 12H10ZM0 7.500L3 5V10ZM15 7.500L12 5V10Z" fill="#2f6fd0" />
					</Ic>
					<svg width="5" height="3"><path d="M0 0H5L2.500 3Z" fill="#444" /></svg>
				</div>
				<div className="ml-[5px] w-[158px] h-[20px] border border-[#cfcec9] bg-[#f6f5f1] rounded-[2px] flex items-center pl-[4px] gap-[4px]">
					<Dots w={19} h={14} />
					<span>m3 drw</span>
					<svg width="7" height="4" className="ml-auto mr-[2px]"><path d="M0 0H7L3.500 4Z" fill="#555" /></svg>
				</div>
			</div>
		</div>
	)
}
